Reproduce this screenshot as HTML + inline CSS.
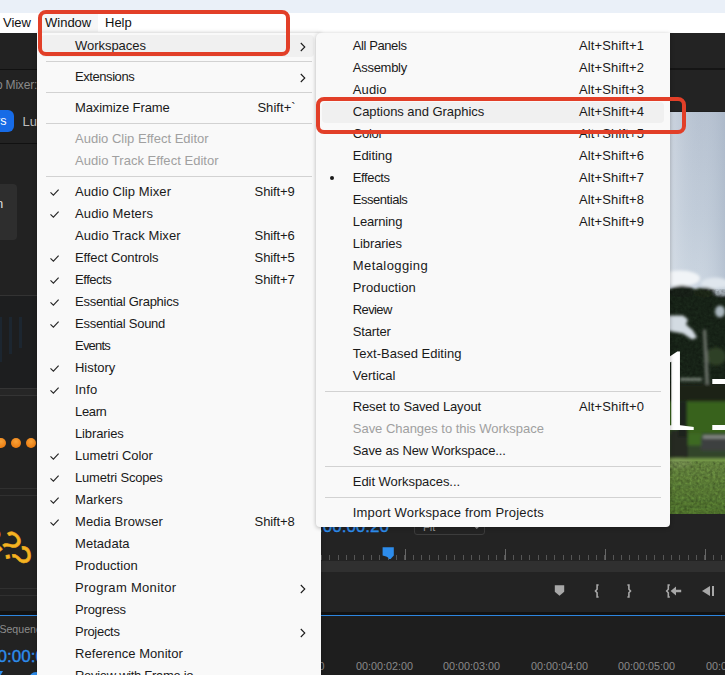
<!DOCTYPE html>
<html><head><meta charset="utf-8">
<style>
html,body{margin:0;padding:0;}
body{width:725px;height:675px;overflow:hidden;position:relative;background:#1e1e1e;font-family:"Liberation Sans",sans-serif;font-size:13px;color:#1a1a1a;}
.abs{position:absolute;}
#top{left:0;top:0;width:725px;height:13px;background:#eaf0f8;}
#bar{left:0;top:13px;width:725px;height:20px;background:#fff;}
#bar span{position:absolute;top:2px;line-height:16px;font-size:13px;color:#111;}
.menu{position:absolute;background:#f9f9f9;box-sizing:border-box;}
#lm{left:37px;top:33px;width:284px;height:642px;padding-top:2px;box-shadow:0 0 4px rgba(0,0,0,.25);}
#rm{left:316px;top:33px;width:354px;height:494px;padding-top:2px;border-radius:5px 0 4px 4px;box-shadow:0 1px 4px rgba(0,0,0,.28);}
.it{position:relative;height:22px;line-height:22px;white-space:nowrap;}
.it .lb{position:absolute;left:38px;top:0;}
#rm .it .lb{left:36.8px;}
.it .sc{position:absolute;top:0;}
.it.dis{color:#a0a0a0;}
.it.hl::before{content:"";position:absolute;left:4px;right:7px;top:0;bottom:0;background:#f0f0f0;border-radius:4px;}
#rm .it.hl::before{left:6px;right:6px;top:1px;bottom:0px;}
.sep{height:1px;background:#d2d2d2;margin:4px 9px 4px 9px;}
#lm .sep{margin:4px 9px 4px 9px;}
.ck{position:absolute;left:12.6px;top:8.2px;}
.ar{position:absolute;left:262.7px;top:6.6px;}
.dot{position:absolute;left:14px;top:9px;width:4px;height:4px;border-radius:50%;background:#1a1a1a;}
.red{position:absolute;border:4.3px solid #e23f28;box-sizing:border-box;border-radius:8px;}
.ln{position:absolute;background:#141414;height:1px;}
</style></head><body>
<!-- app background pieces -->
<div id="top" class="abs"></div>
<div id="bar" class="abs"><div class="abs" style="left:41px;top:1px;width:57px;height:18px;background:#f6f6f6"></div><span style="left:3px">View</span><span style="left:45px">Window</span><span style="left:105px">Help</span></div>

<!-- left dark strip -->
<div class="abs" style="left:0;top:33px;width:37px;height:642px;background:#222;"></div>
<div class="ln" style="left:0;top:68.5px;width:37px;height:1.6px;background:#111"></div>
<div class="abs" style="left:-4px;top:77.7px;color:#8a8a8a;font-size:12px;white-space:nowrap;width:43px;overflow:hidden;letter-spacing:-0.2px">o Mixer:</div>
<div class="abs" style="left:-10px;top:110px;width:24px;height:22px;border-radius:6px;background:#176be6;color:#fff;font-size:12.5px;line-height:23px;text-align:right;box-sizing:border-box;padding-right:7.6px">rs</div>
<div class="abs" style="left:22.6px;top:113.7px;color:#bcbcbc;font-size:13px;width:14.4px;overflow:hidden">Lu</div>
<div class="ln" style="left:0;top:142.7px;width:37px;height:1.6px;background:#111"></div>
<div class="abs" style="left:0;top:184px;width:17px;height:56px;background:#2e2e2e;border-radius:0 4px 4px 0"></div>
<div class="abs" style="left:-4px;top:196px;color:#ddd;font-size:13px;">n</div>
<div class="ln" style="left:0;top:295px;width:37px;background:#333"></div>
<div class="abs" style="left:0;top:296px;width:37px;height:92px;background:#1d1e1f"></div>
<div class="abs" style="left:-1px;top:317px;width:3px;height:45px;background:#1c2630;filter:blur(0.6px)"></div>
<div class="abs" style="left:9px;top:317px;width:3px;height:37px;background:#1c2630;filter:blur(0.6px)"></div>
<div class="abs" style="left:19px;top:317px;width:3px;height:31px;background:#1c2630;filter:blur(0.6px)"></div>
<div class="abs" style="left:0;top:388px;width:37px;height:8px;background:#262626;border-top:1px solid #343434;border-bottom:1px solid #343434;box-sizing:border-box"></div>
<div class="abs" style="left:-4.4px;top:438px;width:10px;height:10px;border-radius:50%;background:radial-gradient(circle at 50% 35%,#f8a238,#ec7f14 70%)"></div>
<div class="abs" style="left:10.6px;top:438px;width:10px;height:10px;border-radius:50%;background:radial-gradient(circle at 50% 35%,#f8a238,#ec7f14 70%)"></div>
<div class="abs" style="left:25.6px;top:438px;width:10px;height:10px;border-radius:50%;background:radial-gradient(circle at 50% 35%,#f8a238,#ec7f14 70%)"></div>
<div class="ln" style="left:0;top:488px;width:37px;background:#303030"></div>
<div class="ln" style="left:0;top:495px;width:37px;background:#303030"></div>
<svg class="abs" style="left:0;top:515px" width="37" height="60" viewBox="0 0 37 60">
<g font-family="'Liberation Sans', sans-serif" font-size="35" fill="#f4b422" stroke="#f0aa1c" stroke-width="0.6" stroke-linejoin="round" text-anchor="middle">
<text transform="translate(8.6 27.6) rotate(51)" y="12.5">?</text>
<text transform="translate(18.6 40.4) rotate(80)" y="12.5">?</text>
<text transform="translate(-12 21) rotate(51)" y="12.5">?</text>
</g></svg>
<div class="ln" style="left:0;top:588px;width:37px;background:#303030"></div>
<div class="ln" style="left:0;top:595px;width:37px;background:#303030"></div>
<div class="abs" style="left:0;top:611px;width:725px;height:4px;background:#121212"></div>
<div class="abs" style="left:0;top:614.8px;width:725px;height:1.4px;background:#2d86e0"></div>
<div class="abs" style="left:-0.6px;top:623px;color:#8c8c8c;font-size:10.6px;line-height:12px;width:37.6px;overflow:hidden;white-space:nowrap">Sequence</div>
<div class="abs" style="left:-2.4px;top:647px;color:#2d8ceb;font-size:17px;line-height:20px;width:39.4px;overflow:hidden;white-space:nowrap;-webkit-text-stroke:0.35px #2d8ceb">0:00:00</div>
<div class="abs" style="left:29px;top:672px;width:14px;height:14px;border-radius:50%;background:#2d8ceb"></div>
<div class="abs" style="left:-5.5px;top:671px;width:0;height:0;border-left:4px solid transparent;border-right:4px solid transparent;border-top:7px solid #2d8ceb"></div>

<!-- right side app -->
<div class="abs" style="left:670px;top:33px;width:55px;height:78px;background:#232323"></div>
<div class="abs" style="left:670px;top:68.4px;width:55px;height:1.8px;background:#151515"></div>
<!-- video -->
<svg class="abs" style="left:670px;top:111.6px" width="55" height="402.4" viewBox="0 0.6 55 402.4">
<defs>
<linearGradient id="sky" x1="0" y1="0" x2="0" y2="1"><stop offset="0" stop-color="#b7c2d1"/><stop offset="0.6" stop-color="#c1ccd9"/><stop offset="1" stop-color="#ccd6e1"/></linearGradient>
<linearGradient id="skyh" x1="0" y1="0" x2="1" y2="0"><stop offset="0" stop-color="#dfe5ec" stop-opacity="0.55"/><stop offset="0.55" stop-color="#c0ccd9" stop-opacity="0"/><stop offset="1" stop-color="#9fadc0" stop-opacity="0.45"/></linearGradient>
<linearGradient id="gr2" x1="0" y1="0" x2="0" y2="1"><stop offset="0" stop-color="#789c4a"/><stop offset="1" stop-color="#5a8432"/></linearGradient>
<filter id="bl" x="-20%" y="-5%" width="140%" height="110%"><feGaussianBlur stdDeviation="1.6"/></filter>
<filter id="nz" x="0" y="0" width="100%" height="100%"><feTurbulence type="fractalNoise" baseFrequency="0.35" numOctaves="2" seed="3"/><feColorMatrix values="0 0 0 0 0  0 0 0 0 0  0 0 0 0 0  0.7 0.7 0.7 0 -0.6"/><feGaussianBlur stdDeviation="0.6"/><feComposite in2="SourceGraphic" operator="in"/></filter>
</defs>
<rect width="55" height="403" fill="#1f2a1a"/>
<rect width="55" height="180" fill="url(#sky)"/>
<rect width="55" height="180" fill="url(#skyh)"/>
<g filter="url(#bl)">
<ellipse cx="10" cy="167" rx="20" ry="8" fill="#f1f4f7"/>
<ellipse cx="45" cy="172" rx="14" ry="6" fill="#dfe6ed"/>
<rect x="-5" y="178" width="65" height="115" fill="#1f2a1a"/>
<ellipse cx="12" cy="180" rx="13" ry="6" fill="#1d281a"/>
<ellipse cx="34" cy="181" rx="10" ry="5" fill="#222e1c"/>
<ellipse cx="52" cy="180" rx="8" ry="4" fill="#c5d0da"/>
</g>
<rect x="0" y="178" width="55" height="96" fill="#0d140b" filter="url(#nz)" opacity="0.4"/>
<g filter="url(#bl)">
<path d="M-4 204 h17 l5 4 l-2 5 l7 6 l4 7 l-5 2 l-9 -6 l-17 -3 z" fill="#d3dbe2"/>
<ellipse cx="50" cy="200" rx="5" ry="6" fill="#a9b6bd"/>
<ellipse cx="46" cy="245" rx="10" ry="9" fill="#2f4026"/>
<path d="M33 218 l3 0 l3 56 l-3.4 0 z" fill="#70766e"/>
<rect x="-5" y="273" width="65" height="19" fill="#1d2119"/>
<rect x="10" y="267" width="22" height="2" fill="#a9b2a9"/>
<rect x="-5" y="290" width="65" height="34" fill="#38621f"/>
<rect x="-5" y="322" width="65" height="26" fill="#33442a"/>
<rect x="18" y="322" width="14" height="12" fill="#3e6a24"/>
<rect x="0" y="318" width="18" height="30" fill="#252a24"/>
<rect x="8" y="290" width="9" height="36" fill="#1f241c"/>
<rect x="31" y="326" width="30" height="13" fill="#3e4140"/>
<rect x="33" y="324" width="30" height="3" fill="#8c918c"/>
<rect x="-5" y="347" width="65" height="62" fill="url(#gr2)"/>
<ellipse cx="8" cy="352" rx="14" ry="5" fill="#7f9d55"/>
</g>
<rect x="0" y="350" width="55" height="53" fill="#3a5c1e" filter="url(#nz)" opacity="0.4"/>
<text transform="translate(-21.4 318.6) scale(0.87 1)" font-family="'Liberation Serif', serif" font-size="118" fill="#fff">1</text>
<text x="43" y="294" font-family="'Liberation Serif', serif" font-size="100" fill="#fff">—</text>
<text x="43" y="340" font-family="'Liberation Serif', serif" font-size="100" fill="#fff">—</text>
</svg>
<!-- below video -->
<div class="abs" style="left:321px;top:514px;width:404px;height:98px;background:#232323"></div>
<div class="abs" style="left:308.6px;top:517px;color:#2d8ceb;font-size:17px;line-height:20px;white-space:nowrap;-webkit-text-stroke:0.35px #2d8ceb">0:00:00:20</div>
<div class="abs" style="left:414px;top:512px;width:71px;height:22.5px;border:1px solid #3c3c3c;border-radius:3px;box-sizing:border-box;color:#9a9a9a;font-size:11px;padding-left:8px;line-height:29px">Fit</div>
<svg class="abs" style="left:472px;top:522px" width="10" height="8" viewBox="0 0 10 8"><path d="M1.5 3 L4.8 6.2 L8.1 3" fill="none" stroke="#9a9a9a" stroke-width="1.2"/></svg>
<div id="ticks" class="abs" style="left:321px;top:549px;width:404px;height:11px;background:
 repeating-linear-gradient(90deg,#555 0,#555 1px,transparent 1px,transparent 8.333px);background-position:0.4px 6px;background-repeat:no-repeat"></div>
<div class="abs" style="left:405px;top:549px;width:1px;height:11px;background:#666"></div>
<div class="abs" style="left:505px;top:549px;width:1px;height:11px;background:#666"></div>
<div class="abs" style="left:605px;top:549px;width:1px;height:11px;background:#666"></div>
<div class="abs" style="left:705px;top:549px;width:1px;height:11px;background:#666"></div>
<svg class="abs" style="left:381px;top:546px" width="16" height="15" viewBox="0 0 16 15"><path d="M1.6 1.2 h11.2 v8.2 l-3.2 3.6 h-1.6 l-1 -1.6 l-1.8 -1 l-3.6 -1 z" fill="#2d8ceb"/></svg>
<div class="abs" style="left:321px;top:561px;width:404px;height:11px;background:#303030"></div>
<!-- transport icons -->
<svg class="abs" style="left:550px;top:580px" width="175" height="22" viewBox="0 0 175 22">
<path d="M4.8 5.2 h9.4 v6.6 l-4.7 4 l-4.7 -4 z" fill="#a8a8a8"/>
<path d="M48.6 5 h-1.5 v4.2 l-1.6 1.8 l1.6 1.8 v4.2 h1.5" fill="none" stroke="#a8a8a8" stroke-width="1.6"/>
<path d="M77.4 5 h1.5 v4.2 l1.6 1.8 l-1.6 1.8 v4.2 h-1.5" fill="none" stroke="#a8a8a8" stroke-width="1.6"/>
<path d="M119.8 5 h-1.5 v4.2 l-1.6 1.8 l1.6 1.8 v4.2 h1.5" fill="none" stroke="#a8a8a8" stroke-width="1.6"/>
<path d="M120.6 11 l5.4 -4.4 v3.2 h5.2 v2.4 h-5.2 v3.2 z" fill="#a8a8a8"/>
<path d="M152 11 l8 -5 v10 z" fill="#a8a8a8"/>
<rect x="162" y="6" width="2" height="10" fill="#a8a8a8"/>
</svg>
<!-- timeline -->
<div class="abs" style="left:321px;top:616px;width:404px;height:59px;background:#1e1e1e"></div>
<div class="abs tl" style="left:318.5px;top:659.6px;color:#8a8a8a;font-size:10.8px;line-height:13px;white-space:nowrap">0</div>
<div class="abs tl" style="left:356px;top:659.6px;color:#8a8a8a;font-size:10.8px;line-height:13px;white-space:nowrap">00:00:02:00</div>
<div class="abs tl" style="left:443px;top:659.6px;color:#8a8a8a;font-size:10.8px;line-height:13px;white-space:nowrap">00:00:03:00</div>
<div class="abs tl" style="left:531px;top:659.6px;color:#8a8a8a;font-size:10.8px;line-height:13px;white-space:nowrap">00:00:04:00</div>
<div class="abs tl" style="left:618px;top:659.6px;color:#8a8a8a;font-size:10.8px;line-height:13px;white-space:nowrap">00:00:05:00</div>
<div class="abs tl" style="left:706px;top:659.6px;color:#8a8a8a;font-size:10.8px;line-height:13px;white-space:nowrap">00:00</div>

<!-- menus -->
<div id="lm" class="menu">
<div class="it hl"><span class="lb" style="letter-spacing:-0.04px">Workspaces</span><svg class="ar" width="6" height="10" viewBox="0 0 6 10"><path d="M0.8 1 L4.8 5 L0.8 9" fill="none" stroke="#1a1a1a" stroke-width="1.1"/></svg></div>
<div class="sep"></div>
<div class="it"><span class="lb" style="letter-spacing:-0.43px">Extensions</span><svg class="ar" width="6" height="10" viewBox="0 0 6 10"><path d="M0.8 1 L4.8 5 L0.8 9" fill="none" stroke="#1a1a1a" stroke-width="1.1"/></svg></div>
<div class="sep"></div>
<div class="it"><span class="lb" style="letter-spacing:-0.1px">Maximize Frame</span><span class="sc" style="left:220.4px;letter-spacing:0.05px">Shift+`</span></div>
<div class="sep"></div>
<div class="it dis"><span class="lb" style="letter-spacing:0.01px">Audio Clip Effect Editor</span></div>
<div class="it dis"><span class="lb" style="letter-spacing:0.03px">Audio Track Effect Editor</span></div>
<div class="sep"></div>
<div class="it"><svg class="ck" width="10" height="8" viewBox="0 0 10 8"><path d="M0.5 3.3 L3.4 6.1 L8.6 0.7" fill="none" stroke="#262626" stroke-width="1.15"/></svg><span class="lb" style="letter-spacing:0.09px">Audio Clip Mixer</span><span class="sc" style="left:217.6px;letter-spacing:-0.12px">Shift+9</span></div>
<div class="it"><svg class="ck" width="10" height="8" viewBox="0 0 10 8"><path d="M0.5 3.3 L3.4 6.1 L8.6 0.7" fill="none" stroke="#262626" stroke-width="1.15"/></svg><span class="lb" style="letter-spacing:0.12px">Audio Meters</span></div>
<div class="it"><span class="lb" style="letter-spacing:0.1px">Audio Track Mixer</span><span class="sc" style="left:217.6px;letter-spacing:-0.12px">Shift+6</span></div>
<div class="it"><svg class="ck" width="10" height="8" viewBox="0 0 10 8"><path d="M0.5 3.3 L3.4 6.1 L8.6 0.7" fill="none" stroke="#262626" stroke-width="1.15"/></svg><span class="lb" style="letter-spacing:-0.1px">Effect Controls</span><span class="sc" style="left:217.6px;letter-spacing:-0.12px">Shift+5</span></div>
<div class="it"><svg class="ck" width="10" height="8" viewBox="0 0 10 8"><path d="M0.5 3.3 L3.4 6.1 L8.6 0.7" fill="none" stroke="#262626" stroke-width="1.15"/></svg><span class="lb" style="letter-spacing:-0.45px">Effects</span><span class="sc" style="left:217.6px;letter-spacing:-0.12px">Shift+7</span></div>
<div class="it"><svg class="ck" width="10" height="8" viewBox="0 0 10 8"><path d="M0.5 3.3 L3.4 6.1 L8.6 0.7" fill="none" stroke="#262626" stroke-width="1.15"/></svg><span class="lb" style="letter-spacing:-0.26px">Essential Graphics</span></div>
<div class="it"><svg class="ck" width="10" height="8" viewBox="0 0 10 8"><path d="M0.5 3.3 L3.4 6.1 L8.6 0.7" fill="none" stroke="#262626" stroke-width="1.15"/></svg><span class="lb" style="letter-spacing:-0.26px">Essential Sound</span></div>
<div class="it"><span class="lb" style="letter-spacing:-0.79px">Events</span></div>
<div class="it"><svg class="ck" width="10" height="8" viewBox="0 0 10 8"><path d="M0.5 3.3 L3.4 6.1 L8.6 0.7" fill="none" stroke="#262626" stroke-width="1.15"/></svg><span class="lb" style="letter-spacing:-0.04px">History</span></div>
<div class="it"><svg class="ck" width="10" height="8" viewBox="0 0 10 8"><path d="M0.5 3.3 L3.4 6.1 L8.6 0.7" fill="none" stroke="#262626" stroke-width="1.15"/></svg><span class="lb" style="letter-spacing:0.15px">Info</span></div>
<div class="it"><span class="lb" style="letter-spacing:-0.35px">Learn</span></div>
<div class="it"><span class="lb" style="letter-spacing:-0.13px">Libraries</span></div>
<div class="it"><svg class="ck" width="10" height="8" viewBox="0 0 10 8"><path d="M0.5 3.3 L3.4 6.1 L8.6 0.7" fill="none" stroke="#262626" stroke-width="1.15"/></svg><span class="lb" style="letter-spacing:-0.01px">Lumetri Color</span></div>
<div class="it"><svg class="ck" width="10" height="8" viewBox="0 0 10 8"><path d="M0.5 3.3 L3.4 6.1 L8.6 0.7" fill="none" stroke="#262626" stroke-width="1.15"/></svg><span class="lb" style="letter-spacing:-0.19px">Lumetri Scopes</span></div>
<div class="it"><svg class="ck" width="10" height="8" viewBox="0 0 10 8"><path d="M0.5 3.3 L3.4 6.1 L8.6 0.7" fill="none" stroke="#262626" stroke-width="1.15"/></svg><span class="lb" style="letter-spacing:0.14px">Markers</span></div>
<div class="it"><svg class="ck" width="10" height="8" viewBox="0 0 10 8"><path d="M0.5 3.3 L3.4 6.1 L8.6 0.7" fill="none" stroke="#262626" stroke-width="1.15"/></svg><span class="lb" style="letter-spacing:0.09px">Media Browser</span><span class="sc" style="left:217.6px;letter-spacing:-0.12px">Shift+8</span></div>
<div class="it"><span class="lb" style="letter-spacing:0.05px">Metadata</span></div>
<div class="it"><span class="lb" style="letter-spacing:0.06px">Production</span></div>
<div class="it"><span class="lb" style="letter-spacing:0.31px">Program Monitor</span><svg class="ar" width="6" height="10" viewBox="0 0 6 10"><path d="M0.8 1 L4.8 5 L0.8 9" fill="none" stroke="#1a1a1a" stroke-width="1.1"/></svg></div>
<div class="it"><span class="lb" style="letter-spacing:-0.13px">Progress</span></div>
<div class="it"><span class="lb" style="letter-spacing:-0.29px">Projects</span><svg class="ar" width="6" height="10" viewBox="0 0 6 10"><path d="M0.8 1 L4.8 5 L0.8 9" fill="none" stroke="#1a1a1a" stroke-width="1.1"/></svg></div>
<div class="it"><span class="lb" style="letter-spacing:0.06px">Reference Monitor</span></div>
<div class="it"><span class="lb" style="letter-spacing:-0.3px">Review with Frame.io</span></div>
</div>
<div id="rm" class="menu">
<div class="it"><span class="lb" style="letter-spacing:-0.41px">All Panels</span><span class="sc" style="left:262.9px;letter-spacing:0.14px">Alt+Shift+1</span></div>
<div class="it"><span class="lb" style="letter-spacing:-0.28px">Assembly</span><span class="sc" style="left:262.9px;letter-spacing:0.14px">Alt+Shift+2</span></div>
<div class="it"><span class="lb" style="letter-spacing:0.1px">Audio</span><span class="sc" style="left:262.9px;letter-spacing:0.14px">Alt+Shift+3</span></div>
<div class="it hl"><span class="lb" style="letter-spacing:-0.04px">Captions and Graphics</span><span class="sc" style="left:262.9px;letter-spacing:0.14px">Alt+Shift+4</span></div>
<div class="it"><span class="lb" style="letter-spacing:-0.23px">Color</span><span class="sc" style="left:262.9px;letter-spacing:0.14px">Alt+Shift+5</span></div>
<div class="it"><span class="lb" style="letter-spacing:-0.05px">Editing</span><span class="sc" style="left:262.9px;letter-spacing:0.14px">Alt+Shift+6</span></div>
<div class="it"><span class="dot"></span><span class="lb" style="letter-spacing:-0.37px">Effects</span><span class="sc" style="left:262.9px;letter-spacing:0.14px">Alt+Shift+7</span></div>
<div class="it"><span class="lb" style="letter-spacing:-0.47px">Essentials</span><span class="sc" style="left:262.9px;letter-spacing:0.14px">Alt+Shift+8</span></div>
<div class="it"><span class="lb" style="letter-spacing:-0.14px">Learning</span><span class="sc" style="left:262.9px;letter-spacing:0.14px">Alt+Shift+9</span></div>
<div class="it"><span class="lb" style="letter-spacing:-0.08px">Libraries</span></div>
<div class="it"><span class="lb" style="letter-spacing:0.41px">Metalogging</span></div>
<div class="it"><span class="lb" style="letter-spacing:0.1px">Production</span></div>
<div class="it"><span class="lb" style="letter-spacing:-0.63px">Review</span></div>
<div class="it"><span class="lb" style="letter-spacing:-0.16px">Starter</span></div>
<div class="it"><span class="lb" style="letter-spacing:0.01px">Text-Based Editing</span></div>
<div class="it"><span class="lb" style="letter-spacing:-0.01px">Vertical</span></div>
<div class="sep"></div>
<div class="it"><span class="lb" style="letter-spacing:-0.16px">Reset to Saved Layout</span><span class="sc" style="left:262.9px;letter-spacing:0.14px">Alt+Shift+0</span></div>
<div class="it dis"><span class="lb" style="letter-spacing:-0.03px">Save Changes to this Workspace</span></div>
<div class="it"><span class="lb" style="letter-spacing:-0.12px">Save as New Workspace...</span></div>
<div class="sep"></div>
<div class="it"><span class="lb" style="letter-spacing:-0.05px">Edit Workspaces...</span></div>
<div class="sep"></div>
<div class="it"><span class="lb" style="letter-spacing:0.19px">Import Workspace from Projects</span></div>
</div>
<!-- red annotation boxes -->
<div class="red" style="left:38px;top:9.8px;width:252px;height:46.2px;"></div>
<div class="red" style="left:316px;top:96.8px;width:370px;height:37.3px;"></div>
</body></html>
